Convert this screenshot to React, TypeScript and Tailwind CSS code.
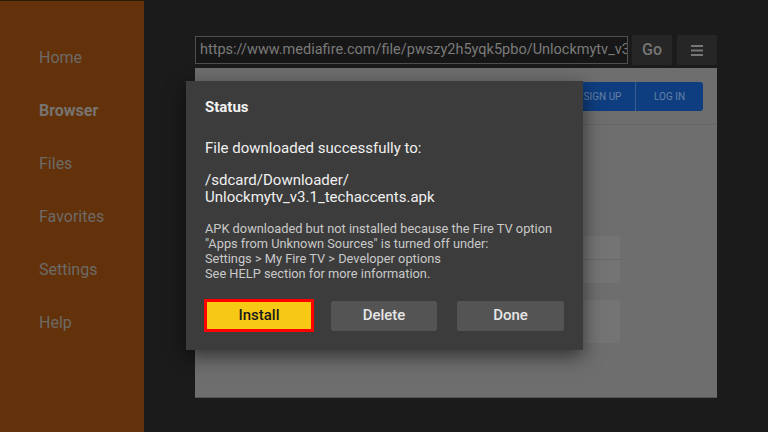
import React from 'react'

const navItems = ['Home', 'Browser', 'Files', 'Favorites', 'Settings', 'Help']

export default function App() {
  return (
    <div
      className="relative flex w-[768px] h-[432px] overflow-hidden bg-[#1b1b1b]"
      style={{ fontFamily: 'Roboto, "Noto Sans", sans-serif' }}
    >
      {/* sidebar */}
      <div className="w-[144px] h-full bg-[#63320b] border-t border-[#2a1a08] pt-[30px] flex flex-col">
        {navItems.map((item) => (
          <div
            key={item}
            className={
              'h-[53px] flex items-center pl-[39px] text-[16px] ' +
              (item === 'Browser' ? 'font-bold text-[#777470]' : 'text-[#6d6a66]')
            }
          >
            {item}
          </div>
        ))}
      </div>

      {/* main browser area */}
      <div className="flex-1 pl-[51px] pt-[35px]">
        <div className="flex items-center">
          <div className="w-[433px] h-[28px] border border-[#4f4f4f] bg-[#171717] overflow-hidden whitespace-nowrap pl-[4px] flex items-center text-[14.5px] text-[#7a7a7a]">
            https://www.mediafire.com/file/pwszy2h5yqk5pbo/Unlockmytv_v3
          </div>
          <div className="ml-[4px] w-[40px] h-[30px] rounded-[2px] bg-[#262626] flex items-center justify-center text-[16px] font-medium text-[#767676]">
            Go
          </div>
          <div className="ml-[5px] w-[40px] h-[30px] rounded-[2px] bg-[#262626] flex items-center justify-center">
            <svg width="12" height="11" viewBox="0 0 12 11">
              <rect x="0" y="0" width="12" height="2" fill="#767676" />
              <rect x="0" y="4.5" width="12" height="2" fill="#767676" />
              <rect x="0" y="9" width="12" height="2" fill="#767676" />
            </svg>
          </div>
        </div>

        {/* dimmed web page */}
        <div className="mt-[3px] w-[522px] h-[330px] bg-[#6e6e6e] border-b border-[#555] flex flex-col">
          <div className="h-[57px] border-b border-[#666] flex items-center justify-end pr-[14px]">
            <div className="flex h-[29px] rounded-[3px] overflow-hidden bg-[#0e3e80]">
              <div className="w-[66px] flex items-center justify-center text-[10px] text-[#6680a6] border-r border-[#3a5e90]">
                SIGN UP
              </div>
              <div className="w-[67px] flex items-center justify-center text-[10px] text-[#6680a6]">
                LOG IN
              </div>
            </div>
          </div>
          <div className="flex flex-1">
            <div className="w-[388px] pt-[8px]">
              <div className="h-[80px] border-r-2 border-[#1f2633]" />
            </div>
            <div className="w-[37px] pt-[111px] flex flex-col">
              <div className="h-[24px] bg-[#747474] border-b border-[#686868]" />
              <div className="h-[23px] bg-[#747474]" />
              <div className="mt-[17px] h-[43px] bg-[#747474]" />
            </div>
          </div>
        </div>
      </div>

      {/* status dialog overlay */}
      <div className="absolute left-[186px] top-[81px] w-[397px] h-[269px] bg-[#3c3c3c] shadow-[0_6px_18px_rgba(0,0,0,0.55)] pl-[19px] pt-[16px] text-white">
        <div className="h-[20px] leading-[20px] text-[15px] font-bold text-[#f2f2f2]">Status</div>
        <div className="mt-[21px] h-[20px] leading-[20px] text-[15px] text-[#f0f0f0]">
          File downloaded successfully to:
        </div>
        <div className="mt-[14px] text-[15px] leading-[17px] text-[#f0f0f0]">
          <div>/sdcard/Downloader/</div>
          <div>Unlockmytv_v3.1_techaccents.apk</div>
        </div>
        <div className="mt-[15px] text-[12.8px] leading-[15px] text-[#c9c9c9]">
          <div>APK downloaded but not installed because the Fire TV option</div>
          <div>"Apps from Unknown Sources" is turned off under:</div>
          <div>Settings &gt; My Fire TV &gt; Developer options</div>
          <div>See HELP section for more information.</div>
        </div>
        <div className="mt-[18px] -ml-[1px] flex items-center">
          <div className="w-[110px] h-[33px] border-[3px] border-[#ff0000] bg-[#f6c915] flex items-center justify-center text-[15px] font-medium text-[#1a1a1a]">
            Install
          </div>
          <div className="ml-[17px] w-[106px] h-[30px] rounded-[2px] bg-[#545454] flex items-center justify-center text-[15px] font-medium text-[#e6e6e6]">
            Delete
          </div>
          <div className="ml-[20px] w-[107px] h-[30px] rounded-[2px] bg-[#545454] flex items-center justify-center text-[15px] font-medium text-[#e6e6e6]">
            Done
          </div>
        </div>
      </div>
    </div>
  )
}
